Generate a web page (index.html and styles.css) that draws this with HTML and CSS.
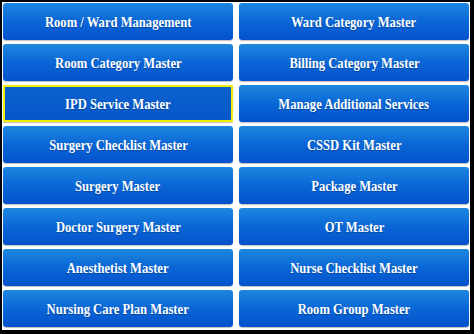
FILE: index.html
```html
<!DOCTYPE html>
<html>
<head>
<meta charset="utf-8">
<link rel="stylesheet" href="styles.css">
</head>
<body>
<div class="panel">
  <button class="tile"><span class="label">Room / Ward Management</span></button>
  <button class="tile"><span class="label">Ward Category Master</span></button>
  <button class="tile"><span class="label">Room Category Master</span></button>
  <button class="tile"><span class="label">Billing Category Master</span></button>
  <button class="tile active"><span class="label">IPD Service Master</span></button>
  <button class="tile"><span class="label">Manage Additional Services</span></button>
  <button class="tile"><span class="label">Surgery Checklist Master</span></button>
  <button class="tile"><span class="label">CSSD Kit Master</span></button>
  <button class="tile"><span class="label">Surgery Master</span></button>
  <button class="tile"><span class="label">Package Master</span></button>
  <button class="tile"><span class="label">Doctor Surgery Master</span></button>
  <button class="tile"><span class="label">OT Master</span></button>
  <button class="tile"><span class="label">Anesthetist Master</span></button>
  <button class="tile"><span class="label">Nurse Checklist Master</span></button>
  <button class="tile"><span class="label">Nursing Care Plan Master</span></button>
  <button class="tile"><span class="label">Room Group Master</span></button>
</div>
</body>
</html>
```
FILE: styles.css
```css
html, body {
  margin: 0;
  padding: 0;
  background: #000;
}
.panel {
  margin: 2px 4px 0 2px;
  background: #fff;
  padding: 1px 1px 3px 1px;
  display: grid;
  grid-template-columns: 230px 230px;
  grid-auto-rows: 37px;
  column-gap: 6px;
  row-gap: 4px;
}
.tile {
  display: flex;
  align-items: center;
  justify-content: center;
  margin: 0;
  padding: 2px 0 0 0;
  border: none;
  border-radius: 3px;
  background: linear-gradient(to bottom, #1e87de 0%, #0a66d6 50%, #0452cc 100%);
  color: #fff;
  font-family: "Liberation Serif", "Times New Roman", serif;
  font-weight: bold;
  font-size: 15px;
  text-shadow: 0 1px 1px rgba(0, 0, 0, 0.25);
  box-shadow: 0 1px 1px rgba(0, 0, 0, 0.25);
  overflow: visible;
}
.label {
  display: inline-block;
  white-space: nowrap;
  transform: scaleX(0.84);
}
.tile.active {
  border: 2px solid #f0f000;
  border-radius: 1px;
  padding-top: 2px;
  background: linear-gradient(to bottom, #0b62cf 0%, #0757c8 100%);
}
```
